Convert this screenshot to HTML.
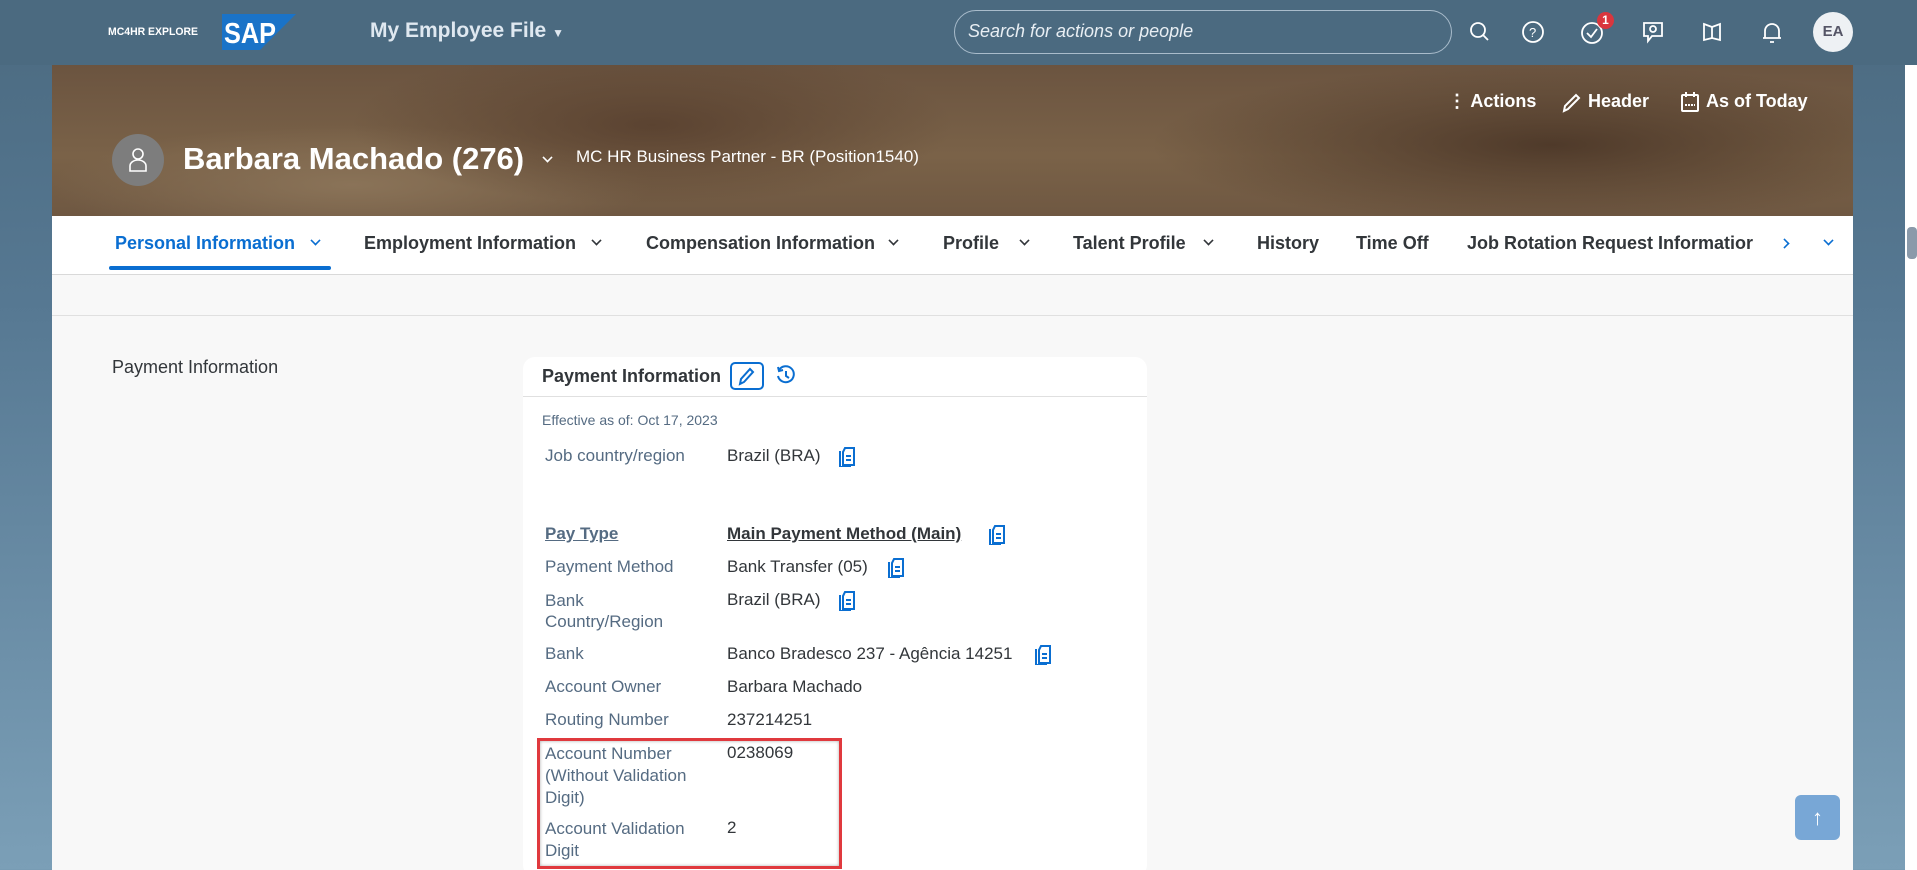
<!DOCTYPE html>
<html style="overflow:hidden"><head><meta charset="utf-8"><style>
*{margin:0;padding:0;box-sizing:border-box}
html,body{width:1917px;height:870px;overflow:hidden}
body{position:relative;font-family:"Liberation Sans",sans-serif;background:linear-gradient(#4b6a80 0,#567892 300px,#7b9fb7 870px)}
.a{position:absolute;white-space:nowrap}
.top{position:absolute;left:0;top:0;width:1917px;height:65px;background:#4b6a80}
.content{position:absolute;left:52px;top:65px;width:1801px;height:805px;background:#f8f8f8;overflow:hidden}
.hdr{position:absolute;left:52px;top:65px;width:1801px;height:151px;background:radial-gradient(ellipse 300px 80px at 600px 60px,#5b4331,transparent),radial-gradient(ellipse 400px 80px at 1500px 80px,#4f3a2a,transparent),radial-gradient(ellipse 300px 60px at 300px 120px,#8a7358,transparent),linear-gradient(#6b5440,#7a6248 60%,#6f5842)}
.tabs{position:absolute;left:52px;top:216px;width:1801px;height:59px;background:#fff;border-bottom:1px solid #d9d9d9}
.tab{position:absolute;top:233px;font-size:18px;font-weight:bold;color:#32363a}
.chev{position:absolute;top:236px;width:9px;height:9px;border-right:2px solid #32363a;border-bottom:2px solid #32363a;transform:rotate(45deg) scale(.8)}
.lbl{position:absolute;left:545px;font-size:17px;color:#556b82}
.val{position:absolute;left:727px;font-size:17px;color:#32363a}
.ic{position:absolute;width:22px;height:22px}
</style></head><body>
<div class="top"></div>
<div class="a" style="left:108px;top:26px;font-size:11px;font-weight:bold;color:#fff;transform:scaleX(.95);transform-origin:left">MC4HR EXPLORE</div>
<svg class="a" style="left:222px;top:14px" width="74" height="36"><polygon points="0,0 74,0 38,36 0,36" fill="#1a73c8"/><text x="2" y="29" font-family="Liberation Sans" font-weight="bold" font-size="29" fill="#fff" textLength="52" lengthAdjust="spacingAndGlyphs">SAP</text></svg>
<div class="a" style="left:370px;top:19px;font-size:21px;font-weight:bold;color:#dfe8f0">My Employee File <span style="font-size:12px">▼</span></div>
<div class="a" style="left:954px;top:10px;width:498px;height:44px;border:1px solid #a9bccb;border-radius:22px"></div>
<div class="a" style="left:968px;top:21px;font-size:18px;font-style:italic;color:#e8eef3">Search for actions or people</div>
<svg class="a" style="left:1468px;top:20px" width="380" height="26" fill="none" stroke="#fff" stroke-width="1.8">
<circle cx="10" cy="10" r="7"/><line x1="15" y1="15" x2="20" y2="20"/>
<circle cx="65" cy="12" r="10"/><text x="61" y="17" font-size="13" fill="#fff" stroke="none" font-family="Liberation Sans">?</text>
<circle cx="124" cy="13" r="10"/><polyline points="119,13 123,17 129,9"/>
<path d="M176 3h18v13h-10l-4 5v-5h-4z"/><circle cx="185" cy="9" r="3"/>
<path d="M236 4l8 3 8-3v16l-8-2-8 2z M244 7v11"/>
<path d="M297 18V11a7 7 0 0 1 14 0v7h2H295z M302 22h4"/>
</svg>
<div class="a" style="left:1597px;top:12px;width:17px;height:17px;border-radius:50%;background:#d9363e;color:#fff;font-size:12px;font-weight:bold;text-align:center;line-height:17px">1</div>
<div class="a" style="left:1813px;top:12px;width:40px;height:40px;border-radius:50%;background:#eef1f4;color:#556;font-size:15px;font-weight:bold;text-align:center;line-height:40px">EA</div>
<div class="content"></div>
<div class="hdr"></div>
<div class="a" style="left:1448px;top:91px;font-size:18px;font-weight:bold;color:#fff">⋮ Actions</div>
<svg class="a" style="left:1560px;top:91px" width="22" height="22" fill="none" stroke="#fff" stroke-width="2"><path d="M4 20l1-5L16 4l3 3L8 18z"/></svg>
<div class="a" style="left:1588px;top:91px;font-size:18px;font-weight:bold;color:#fff">Header</div>
<svg class="a" style="left:1680px;top:91px" width="20" height="22" fill="none" stroke="#fff" stroke-width="2"><rect x="2" y="4" width="16" height="16" rx="1"/><line x1="6" y1="1" x2="6" y2="6"/><line x1="14" y1="1" x2="14" y2="6"/><line x1="5" y1="14" x2="15" y2="14" stroke-dasharray="2 1"/></svg>
<div class="a" style="left:1706px;top:91px;font-size:18px;font-weight:bold;color:#fff">As of Today</div>
<div class="a" style="left:112px;top:134px;width:52px;height:52px;border-radius:50%;background:#7d7d7d"></div>
<svg class="a" style="left:126px;top:146px" width="24" height="28" fill="none" stroke="#fff" stroke-width="1.6"><circle cx="12" cy="8" r="5"/><path d="M4 25v-5a8 6 0 0 1 16 0v5z"/></svg>
<div class="a" style="left:183px;top:141px;font-size:31px;font-weight:bold;color:#fff">Barbara Machado (276)</div>
<div class="chev" style="left:543px;top:153px;border-color:#fff"></div>
<div class="a" style="left:576px;top:147px;font-size:17px;color:#fff">MC HR Business Partner - BR (Position1540)</div>
<div class="tabs"></div>
<div class="tab" style="left:115px;color:#0a6ed1">Personal Information</div><div class="chev" style="left:311px;border-color:#0a6ed1"></div>
<div class="a" style="left:109px;top:266px;width:222px;height:4px;background:#0a6ed1;border-radius:2px"></div>
<div class="tab" style="left:364px">Employment Information</div><div class="chev" style="left:592px"></div>
<div class="tab" style="left:646px">Compensation Information</div><div class="chev" style="left:889px"></div>
<div class="tab" style="left:943px">Profile</div><div class="chev" style="left:1020px"></div>
<div class="tab" style="left:1073px">Talent Profile</div><div class="chev" style="left:1204px"></div>
<div class="tab" style="left:1257px">History</div>
<div class="tab" style="left:1356px">Time Off</div>
<div class="tab" style="left:1467px">Job Rotation Request Informatior</div>
<div class="chev" style="left:1780px;top:239px;border-color:#0a6ed1;transform:rotate(-45deg) scale(.8)"></div>
<div class="chev" style="left:1824px;border-color:#0a6ed1"></div>
<div class="a" style="left:52px;top:315px;width:1801px;height:1px;background:#e0e0e0"></div>
<div class="a" style="left:112px;top:357px;font-size:18px;color:#32363a">Payment Information</div>
<div class="a" style="left:523px;top:357px;width:624px;height:520px;background:#fff;border-radius:12px"></div>
<div class="a" style="left:523px;top:396px;width:624px;height:1px;background:#e0e0e0"></div>
<div class="a" style="left:542px;top:366px;font-size:18px;font-weight:bold;color:#32363a">Payment Information</div>
<div class="a" style="left:730px;top:362px;width:34px;height:28px;border:2px solid #0a6ed1;border-radius:5px"></div>
<svg class="a" style="left:737px;top:366px" width="20" height="20" fill="none" stroke="#0a6ed1" stroke-width="2"><path d="M3 18l1-5L13 3l3 3L7 16z"/></svg>
<svg class="a" style="left:775px;top:365px" width="22" height="22" fill="none" stroke="#0a6ed1" stroke-width="2"><path d="M4 5a8 8 0 1 1-1 6"/><polyline points="3,2 4,6 8,5"/><polyline points="11,6 11,11 14,13"/></svg>
<div class="a" style="left:542px;top:412px;font-size:14px;color:#556b82">Effective as of: Oct 17, 2023</div>
<div class="lbl" style="top:446px">Job country/region</div><div class="val" style="top:446px">Brazil (BRA)</div>
<div class="lbl" style="top:524px;font-weight:bold;text-decoration:underline">Pay Type</div><div class="val" style="top:524px;font-weight:bold;text-decoration:underline">Main Payment Method (Main)</div>
<div class="lbl" style="top:557px">Payment Method</div><div class="val" style="top:557px">Bank Transfer (05)</div>
<div class="lbl" style="top:590px;line-height:21px">Bank<br>Country/Region</div><div class="val" style="top:590px">Brazil (BRA)</div>
<div class="lbl" style="top:644px">Bank</div><div class="val" style="top:644px">Banco Bradesco 237 - Agência 14251</div>
<div class="lbl" style="top:677px">Account Owner</div><div class="val" style="top:677px">Barbara Machado</div>
<div class="lbl" style="top:710px">Routing Number</div><div class="val" style="top:710px">237214251</div>
<div class="lbl" style="top:743px;line-height:22px">Account Number<br>(Without Validation<br>Digit)</div><div class="val" style="top:743px">0238069</div>
<div class="lbl" style="top:818px;line-height:22px">Account Validation<br>Digit</div><div class="val" style="top:818px">2</div>
<div class="a" style="left:537px;top:738px;width:305px;height:131px;border:3px solid #e0393e;box-shadow:inset 0 0 3px #aaa"></div>
<svg width="0" height="0" style="position:absolute"><defs><g id="d" fill="none" stroke="#0a6ed1" stroke-width="2"><path d="M10 3h9v17h-11v-13z"/><path d="M5 6v16h11"/><line x1="11" y1="11" x2="16" y2="11"/><line x1="11" y1="15" x2="16" y2="15"/></g></defs></svg>
<svg class="ic" style="left:835px;top:445px"><use href="#d"/></svg>
<svg class="ic" style="left:985px;top:523px"><use href="#d"/></svg>
<svg class="ic" style="left:884px;top:556px"><use href="#d"/></svg>
<svg class="ic" style="left:835px;top:589px"><use href="#d"/></svg>
<svg class="ic" style="left:1031px;top:643px"><use href="#d"/></svg>
<div class="a" style="left:1795px;top:795px;width:45px;height:45px;border-radius:6px;background:#78a7d6;color:#fff;font-size:22px;text-align:center;line-height:45px;font-weight:bold">↑</div>
<div class="a" style="left:1905px;top:65px;width:12px;height:805px;background:#fff"></div>
<div class="a" style="left:1907px;top:227px;width:10px;height:32px;background:#8a9aaa;border-radius:4px"></div>
</body></html>
